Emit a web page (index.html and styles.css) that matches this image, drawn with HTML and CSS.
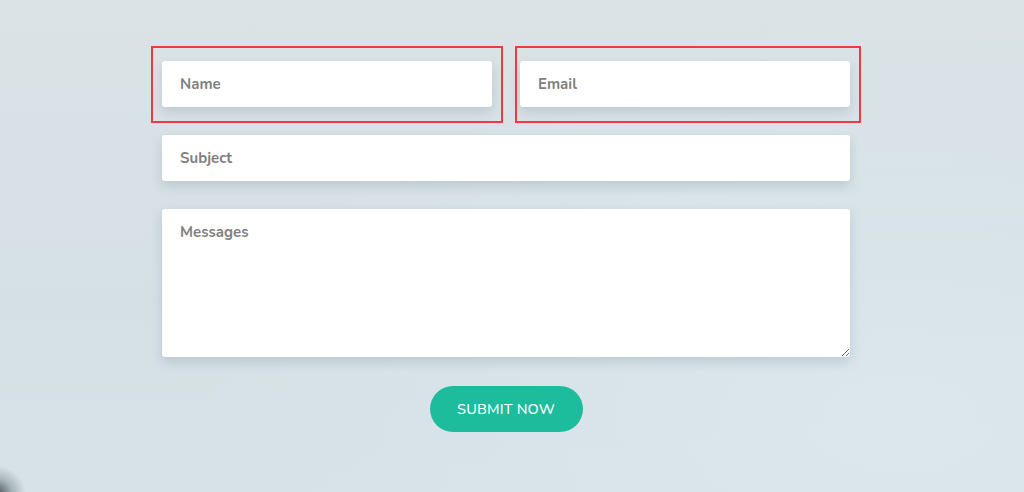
FILE: index.html
```html
<!DOCTYPE html>
<html lang="en">
<head>
<meta charset="utf-8">
<title>Contact form</title>
<link rel="stylesheet" href="styles.css">
</head>
<body>
<div class="page">
  <form class="form">
    <div class="row">
      <div class="field marked marked-left"><input class="input" type="text" placeholder="Name"></div>
      <div class="field marked marked-right"><input class="input" type="email" placeholder="Email"></div>
    </div>
    <div class="field"><input class="input" type="text" placeholder="Subject"></div>
    <div class="field"><textarea class="input textarea" placeholder="Messages"></textarea></div>
    <div class="actions"><button class="submit" type="button">SUBMIT NOW</button></div>
  </form>
</div>
</body>
</html>
```
FILE: styles.css
```css
html, body {
  margin: 0;
  height: 100%;
}
body {
  font-family: "Nunito", "Noto Sans", "Open Sans", sans-serif;
  background:
    radial-gradient(ellipse 30px 28px at -4px 494px, rgba(30,40,42,0.8), rgba(60,75,80,0.3) 55%, rgba(210,222,226,0) 100%),
    radial-gradient(ellipse 700px 400px at 900px 420px, #dbe7ed, rgba(219,231,237,0) 100%),
    linear-gradient(180deg, #dbe3e6 0%, #d5e0e5 60%, #d6e2e7 100%);
  overflow: hidden;
}
.page {
  padding: 61px 0 0 162px;
}
.form {
  width: 688px;
  display: flex;
  flex-direction: column;
  gap: 28px;
}
.row {
  display: flex;
  gap: 28px;
}
.row .field {
  flex: 1;
}
.field {
  position: relative;
  display: flex;
}
.marked::after {
  content: "";
  position: absolute;
  top: -15px;
  bottom: -16px;
  border: 2px solid #ef3b3e;
  pointer-events: none;
}
.marked-left::after {
  left: -11px;
  right: -11px;
}
.marked-right::after {
  left: -5px;
  right: -11px;
}
.input {
  box-sizing: border-box;
  width: 100%;
  height: 46px;
  border: none;
  border-radius: 3px;
  background: #fff;
  box-shadow: 0 5px 12px rgba(40, 70, 85, 0.16);
  padding: 0 18px;
  font-family: inherit;
  font-size: 15px;
  font-weight: 700;
  color: #555;
  outline: none;
}
.input::placeholder {
  color: #808080;
}
.textarea {
  height: 148px;
  padding-top: 13px;
  resize: vertical;
  display: block;
}
.actions {
  display: flex;
  justify-content: center;
  margin-top: 1px;
}
.submit {
  width: 153px;
  height: 46px;
  border: none;
  border-radius: 23px;
  background: #1dbc9c;
  color: #fff;
  font-family: inherit;
  font-size: 14.5px;
  font-weight: 500;
  letter-spacing: 0.2px;
  cursor: pointer;
}
```
